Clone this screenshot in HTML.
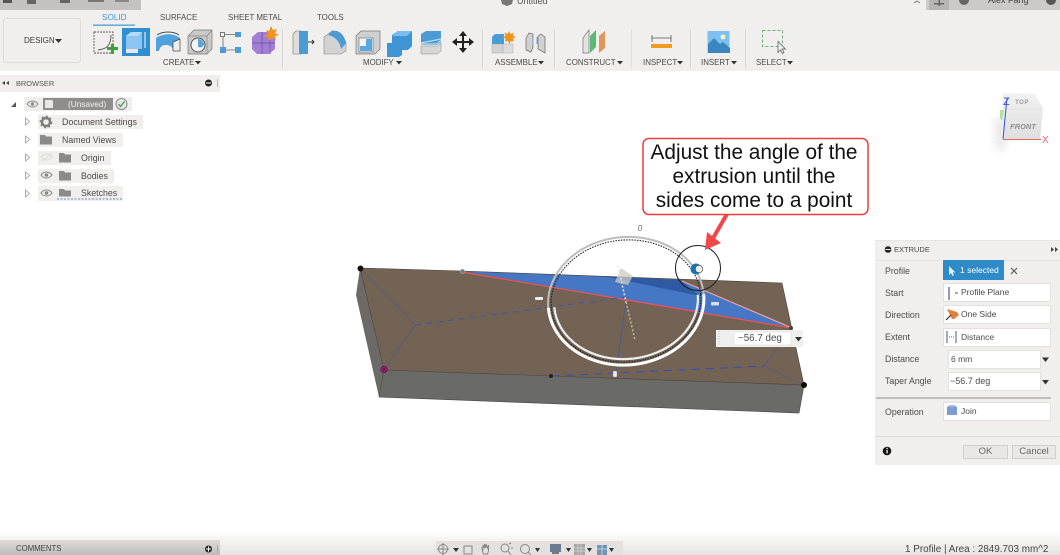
<!DOCTYPE html>
<html><head><meta charset="utf-8"><style>
html,body{margin:0;padding:0;background:#fff}
#p{position:relative;width:1060px;height:555px;overflow:hidden;background:#fff;font-family:"Liberation Sans",sans-serif;color:#444}
svg{position:absolute;left:0;top:0}
text{font-family:"Liberation Sans",sans-serif}
.t{position:absolute;white-space:nowrap;font-size:7.9px;color:#4a4a4a;line-height:12px}
.f{position:absolute;background:#fff;border:1px solid #e2e2e2;box-sizing:border-box;height:19px;font-size:8.5px;line-height:17px;color:#4a4a4a;white-space:nowrap}
.l{position:absolute;left:885px;font-size:8.8px;color:#4a4a4a;line-height:12px;white-space:nowrap}
</style></head><body><div id="p">
<svg width="1060" height="555" viewBox="0 0 1060 555">
<defs>
<linearGradient id="bot" x1="0" y1="0" x2="0" y2="1"><stop offset="0" stop-color="#fff"/><stop offset="1" stop-color="#e4e3e1"/></linearGradient>
<linearGradient id="b2" x1="0" y1="0" x2="0" y2="1"><stop offset="0" stop-color="#dcdbd9"/><stop offset="1" stop-color="#bebdbb"/></linearGradient>
<linearGradient id="cube" x1="0" y1="0" x2="0" y2="1"><stop offset="0" stop-color="#f2f2f2"/><stop offset="1" stop-color="#dedede"/></linearGradient>
<filter id="bl" x="-100%" y="-50%" width="300%" height="200%"><feGaussianBlur stdDeviation="4"/></filter>
<filter id="s"><feGaussianBlur stdDeviation=".35"/></filter>
</defs>
<!-- toolbar -->
<rect width="1060" height="71" fill="#f0efee"/>
<rect width="141" height="10" fill="#c3c2c1"/>
<rect x="926" width="134" height="10" fill="#cbcac9"/>
<rect x="929" width="20" height="10" fill="#b6b5b4"/>
<rect x="934" y="3" width="10" height="1.5" fill="#666"/><rect x="938.5" y="0" width="1.5" height="6" fill="#666"/>
<circle cx="964" cy="0" r="5" fill="#666"/><circle cx="1051" cy="0" r="5" fill="#555"/>
<path d="M914 3l3-2 3 2" fill="none" stroke="#777"/>
<rect x="3" width="9" height="3" fill="#555"/><rect x="27" width="9" height="4" fill="#666"/><rect x="60" width="10" height="3" fill="#666"/><rect x="88" width="16" height="2" fill="#777"/><rect x="115" width="14" height="2" fill="#888"/>
<path d="M501 0h12l-1 4-5 2-5-2z" fill="#777"/>
<rect x="3.500" y="18.500" width="77" height="44" rx="3" fill="#f0efee" stroke="#dedddc"/>
<path d="M55 39h7l-3.500 4z" fill="#333"/>
<rect x="93" y="24.500" width="42" height="1.300" fill="#4b9bd5"/>
<!-- sketch -->
<g fill="none" stroke="#555" stroke-width=".9">
<path d="M94 32h19v21h-19z" stroke-dasharray="2 1"/><path d="M98 50c10-1 13-6 13-15"/>
</g>
<path d="M107 47h4v-3h3v3h4v3h-4v4h-3v-4h-4z" fill="#3aa13c"/>
<!-- extrude -->
<rect x="122" y="28" width="28" height="28" fill="#2f8fd0"/>
<path d="M126 36l5-4h11v17h-16z" fill="#8cc5f2"/><path d="M131 32h11l-4 4h-12z" fill="#b4dbf8"/>
<rect x="126" y="49" width="12" height="4" fill="#e7e7e7"/>
<path d="M145 32v16" stroke="#fff"/>
<!-- revolve -->
<path d="M156 38c7-5 18-5 24 0v13h-7c0-5-4-6-7-6s-6 1-7 6h-3z" fill="#4fa2dd"/>
<path d="M173 42l7-3v12h-7z" fill="#eee" stroke="#444" stroke-width=".7"/>
<path d="M157 35c6-4 16-4 22 0" fill="none" stroke="#444" stroke-width=".9"/>
<!-- hole -->
<path d="M188 36l6-6h18v19l-5 5h-19z" fill="#c9c9c9" stroke="#777" stroke-width=".7"/><path d="M188 36h19l5-6M207 36v18" stroke="#888" fill="none" stroke-width=".7"/>
<circle cx="198" cy="45" r="7" fill="#f4f4f4" stroke="#555"/><path d="M198 45v-6a6 6 0 0 1 6 6 5 5 0 0 1-6 2z" fill="#5aa5db"/>
<!-- fillet points -->
<rect x="220.500" y="32.500" width="4" height="4" fill="#fff" stroke="#555" stroke-width=".8"/>
<rect x="235" y="32" width="6" height="5" fill="#4b9bd5"/><rect x="220" y="47" width="6" height="6" fill="#4b9bd5"/><rect x="235" y="47" width="6" height="6" fill="#4b9bd5"/>
<path d="M225 34.500h10M223 37v10M226 50h9" stroke="#666" stroke-width=".8"/>
<!-- purple -->
<path d="M252 37l6-5h12l5 5v12l-6 5h-12l-5-5z" fill="#a27fd2"/>
<path d="M252 43h23M262 32v22M270 33v21" stroke="#6e4ba8" stroke-width=".7"/>
<path d="M269 31l2-5 2 4 4-1-2 4 4 2-4 1 1 4-4-2-3 3-1-4-4-1 4-2-2-4z" fill="#f0941e"/>
<line x1="282.500" y1="30" x2="282.500" y2="68" stroke="#d8d7d6"/>
<!-- modify -->
<path d="M293 34l3-3h6v23h-9z" fill="#ddd" stroke="#777" stroke-width=".6"/>
<path d="M299 31h9v23h-9z" fill="#4b9bd5"/><path d="M308 42h6M312 40l2 2-2 2" stroke="#333" fill="none"/>
<path d="M324 37l8-6c8-1 12 5 14 12v8l-5 3h-17z" fill="#d2d2d2" stroke="#888" stroke-width=".6"/>
<path d="M332 31c8-1 12 5 14 12l-5 6c-1-7-5-12-13-14z" fill="#4b9bd5"/>
<path d="M356 36l5-5h19v18l-5 5h-19z" fill="#cfcfcf" stroke="#777" stroke-width=".7"/>
<rect x="359" y="38" width="14" height="14" fill="#f5f5f5" stroke="#666" stroke-width=".6"/>
<path d="M366 39h6v12h-12v-5h6z" fill="#5ba8e0"/>
<path d="M387 43l5 0 0-8 6-4h14v15l-4 4h-6v5l-3 2h-12z" fill="#3f94d6"/>
<path d="M392 36l6-5h14l-5 5z" fill="#7cbdf0"/>
<path d="M421 34l5-3h15v11l-4 3h-16z" fill="#4b9bd5"/>
<path d="M421 43l20-4M421 44h16l4-4" stroke="#bcd9ef" stroke-width="1.200" fill="none"/>
<path d="M421 46h16l4-3v8l-4 3h-16z" fill="#d6d6d6" stroke="#888" stroke-width=".5"/>
<path d="M463 31l4 5h-3v5h5v-3l5 4-5 4v-3h-5v5h3l-4 5-4-5h3v-5h-5v3l-5-4 5-4v3h5v-5h-3z" fill="#222"/>
<line x1="482.500" y1="30" x2="482.500" y2="68" stroke="#d8d7d6"/>
<!-- assemble -->
<rect x="492" y="44" width="11" height="9" fill="#d2d2d2" stroke="#aaa" stroke-width=".5"/><rect x="503" y="44" width="10" height="9" fill="#dcdcdc" stroke="#aaa" stroke-width=".5"/>
<path d="M492 37l3-3h9v10h-12z" fill="#4b9bd5"/>
<path d="M509 31l1.500 3 3-1.500-.5 3.500 3 1-3 1.500 1 3-3-.5-1.500 3-1.500-3-3 .5 .5-3-3-1.500 3-1-1-3.500 3 1.500z" fill="#f0941e"/>
<path d="M526 38l3-5 4 1v13l-2 5-5-2zM545 37l-4-3-3 2v13l7 4z" fill="#d0d0d0" stroke="#666" stroke-width=".7"/><path d="M533 39v6M537 37v7" stroke="#6aa6d6"/>
<line x1="554.500" y1="30" x2="554.500" y2="68" stroke="#d8d7d6"/>
<!-- construct -->
<path d="M583 38l6-8v23h-6z" fill="#e2e2e2" stroke="#777" stroke-width=".7"/>
<path d="M590 36l6-6v17l-6 6z" fill="#5cb874"/>
<path d="M599 36l6-5v17l-6 5z" fill="#e3955a"/>
<line x1="631.500" y1="30" x2="631.500" y2="68" stroke="#e0dfde"/>
<!-- inspect -->
<path d="M652 38h19M652 35v7M671 35v7" stroke="#555" stroke-width=".8"/>
<rect x="651" y="44" width="21" height="4" fill="#f09a1e"/>
<line x1="690.500" y1="30" x2="690.500" y2="68" stroke="#d8d7d6"/>
<!-- insert -->
<rect x="707.500" y="31" width="22" height="22" fill="#7cc0f0"/>
<path d="M708 53v-9l6-6 6 6 3-2 7 6v5z" fill="#3a87bf"/>
<circle cx="723" cy="37" r="2.500" fill="#fdf1c0"/>
<line x1="745.500" y1="30" x2="745.500" y2="68" stroke="#d8d7d6"/>
<!-- select -->
<rect x="762.500" y="30.500" width="20" height="16" fill="none" stroke="#68b07c" stroke-dasharray="3 2"/>
<path d="M778 41.500v11l2.500-2.500 2 3.500 1.500-1-2-3.500h3.500z" fill="#eee" stroke="#555" stroke-width=".7"/>
<!-- dropdown arrows -->
<g fill="#333">
<path d="M195 61h6l-3 3.500z"/><path d="M396 61h6l-3 3.500z"/><path d="M538 61h6l-3 3.500z"/><path d="M617 61h6l-3 3.500z"/><path d="M677 61h6l-3 3.500z"/><path d="M731 61h6l-3 3.500z"/><path d="M787 61h6l-3 3.500z"/>
</g>
<!-- browser -->
<rect y="75" width="220" height="17" fill="#f0efee"/>
<path d="M2 83l3-2v4zM6 83l3-2v4z" fill="#444"/>
<circle cx="208.500" cy="83" r="3.500" fill="#222"/><rect x="206" y="82.500" width="5" height="1" fill="#fff"/>
<rect x="217" y="79" width="1" height="8" fill="#bbb"/>
<path d="M11 107l5-5v5z" fill="#555"/>
<rect x="24" y="97" width="108" height="14" fill="#f0efee"/>
<rect x="43" y="98" width="70" height="12" fill="#8f8e8d"/>
<path d="M45 100h7l1 1v7h-8z" fill="#e8e8e8"/>
<path d="M27 104c3-4 8-4 11 0-3 4-8 4-11 0z" fill="none" stroke="#888"/><circle cx="32.500" cy="104" r="1.700" fill="#888"/>
<circle cx="121.500" cy="104" r="5.500" fill="#e6e6e6" stroke="#888"/><path d="M118.500 104l2 2.500 4-5" stroke="#3f9c4a" fill="none" stroke-width="1.300"/>
<g fill="#f0efee">
<rect x="38" y="115" width="105" height="14"/><rect x="38" y="133" width="85" height="14"/><rect x="38" y="151" width="73" height="14"/><rect x="38" y="169" width="76" height="14"/><rect x="38" y="186" width="85" height="15"/>
</g>
<g fill="none" stroke="#999" stroke-width=".8">
<path d="M25.500 118v7l4-3.500zM25.500 136v7l4-3.500zM25.500 154v7l4-3.500zM25.500 172v7l4-3.500zM25.500 190v7l4-3.500z"/>
</g>
<circle cx="46" cy="122" r="4" fill="none" stroke="#7d7d7d" stroke-width="2.500"/><circle cx="46" cy="122" r="5.700" fill="none" stroke="#7d7d7d" stroke-width="1.400" stroke-dasharray="2 2.400"/>
<g fill="#8a8a8a">
<path d="M40 135h5l1 1.500h6v8h-12z"/><path d="M59 153h5l1 1.500h6v8h-12z"/><path d="M59 171h5l1 1.500h6v8h-12z"/><path d="M59 189h5l1 1.500h6v6h-12z"/>
</g>
<g fill="none" stroke="#888">
<path d="M41 175c3-4 8-4 11 0-3 4-8 4-11 0z"/><path d="M41 193c3-4 8-4 11 0-3 4-8 4-11 0z"/>
</g>
<circle cx="46.500" cy="175" r="1.800" fill="#888"/><circle cx="46.500" cy="193" r="1.800" fill="#888"/>
<path d="M41 157c3-4 8-4 11 0-3 4-8 4-11 0zM42 161l10-8" fill="none" stroke="#dcdcdc"/>
<path d="M57 199h65" stroke="#6f86b5" stroke-dasharray="2 1.500"/>
<!-- model -->
<g filter="url(#s)">
<path d="M360 268l24 102-5 27-23-102z" fill="#6c6b69"/>
<path d="M384 370l420 15-5 28-420-16z" fill="#6b6b69"/>
<path d="M360 268l102 3 320 12 22 102-420-15z" fill="#736354"/>
<path d="M462 271l154 6 64 3 112 48z" fill="#4477c4"/>
<path d="M603 276l77 4 20 16z" fill="#2f5aa3"/>
<path d="M462 272l330 56" stroke="#f2505a" stroke-width="1.200" fill="none"/>
<path d="M682 281l110 47" stroke="#f7a0a0" stroke-width="1.200" fill="none"/>
<path d="M360 268l102 3 320 12 22 102-420-15z" fill="none" stroke="#4a433c" stroke-width=".6"/>
<path d="M379 397l420 16M384 370l-5 27M804 385l-5 28" stroke="#4e4e4c" stroke-width=".7" fill="none"/>
<path d="M360 268l55 57-31 45M764 366l40 19M764 366l24-32" stroke="#5c5a7c" stroke-width=".8" fill="none"/>
<path d="M415 325l211 -28" stroke="#3d58a8" stroke-width="1" stroke-dasharray="6 5" fill="none"/>
<path d="M552 376l212-10" stroke="#3450b8" stroke-width="1" stroke-dasharray="8 6" fill="none"/>
<path d="M626 301l-10 72" stroke="#4f5b88" stroke-width="1" fill="none"/>
</g>
<!-- protractor -->
<path d="M621 268l12 8-5 9-13-3z" fill="#cfcac4" opacity=".75"/>
<path d="M618 266l8 36" stroke="#e4e4e4" stroke-width="1.500" stroke-dasharray="2 2"/>
<path d="M626 302l9 38" stroke="#c9b894" stroke-width="1.500" stroke-dasharray="2 2"/>
<g transform="rotate(-5 626 301)" fill="none">
<path d="M548 301A78 64 0 0 1 704 301" stroke="#bdbdbd" stroke-width="2"/>
<path d="M548 301A78 64 0 0 0 704 301" stroke="#fff" stroke-width="3"/>
<path d="M554 301A72 58 0 0 0 698 301" stroke="#f4f4f4" stroke-width="2.200" opacity=".95"/>
<ellipse cx="626" cy="301" rx="75" ry="61" stroke="#222" stroke-width="1.100" stroke-dasharray="1.500 1.200"/>
</g>
<text x="640" y="231" font-size="8" font-style="italic" fill="#666" text-anchor="middle">0</text>
<rect x="535" y="297" width="8" height="3" rx="1" fill="#eee"/><rect x="711" y="302" width="8" height="3.500" rx="1" fill="#d8dde4"/>
<rect x="613" y="371" width="4" height="6" rx="1" fill="#eee" stroke="#888" stroke-width=".4"/>
<circle cx="698" cy="268" r="22.500" fill="none" stroke="#222" stroke-width="1"/>
<circle cx="696" cy="269" r="5.500" fill="#1a73b5"/><circle cx="699" cy="269" r="3.800" fill="#e8eef2" stroke="#333" stroke-width=".6"/>
<circle cx="360.500" cy="268.500" r="3" fill="#111"/>
<circle cx="384" cy="369.500" r="3.300" fill="#9c1672" stroke="#4a2038" stroke-width=".6"/><circle cx="384" cy="369.500" r="1" fill="#3a1a30"/>
<circle cx="462.500" cy="271.500" r="2" fill="#777" stroke="#999"/>
<circle cx="551" cy="376" r="2" fill="#222"/>
<circle cx="804" cy="385" r="3" fill="#0a0a0a"/>
<circle cx="791" cy="328" r="2" fill="#444"/>
<rect x="716" y="330" width="87" height="17" fill="#efefed"/>
<rect x="734" y="332" width="57" height="13" fill="#fff" stroke="#e2e2e2" stroke-width=".7"/>
<path d="M795 337h7l-3.500 4.500z" fill="#333"/>
<path d="M719 331v15" stroke="#bbb" stroke-dasharray="1 1.500"/>
<!-- callout -->
<path d="M727 214L712 240" stroke="#f04848" stroke-width="4" fill="none"/>
<path d="M705 250l2-18 14 11z" fill="#f04848"/>
<rect x="643" y="138.500" width="225" height="76" rx="6" fill="#fff" stroke="#ee3d3d" stroke-width="1.500"/>
<!-- view cube -->
<path d="M994 118h12v32h-10z" fill="#e9e9e9" filter="url(#bl)"/>
<path d="M1003 93l32 1 8 14-3 32-37 0z" fill="url(#cube)"/>
<path d="M1004 109l38 0" stroke="#e2e2e2"/>
<path d="M1007 98l-4 41" stroke="#3a52d8"/><path d="M1003 139.500h38" stroke="#e66"/>
<path d="M1000 110l0 8 2 3 2-11z" fill="#a9e3a8"/>
<text x="1003" y="105" font-size="11" fill="#4353d8">Z</text>
<text x="1042" y="143" font-size="10" fill="#ee6a6a">X</text>
<text x="1022" y="104" font-size="6" font-weight="bold" fill="#999" text-anchor="middle" letter-spacing=".5">TOP</text>
<text x="1023" y="129" font-size="7.500" font-weight="bold" font-style="italic" fill="#8f8f8f" text-anchor="middle">FRONT</text>
<!-- panel -->
<rect x="875" y="240" width="185" height="225" fill="#f0efee"/>
<rect x="875" y="240" width="185" height="1" fill="#e6e5e4"/>
<rect x="875" y="260" width="185" height="1" fill="#e4e3e2"/>
<rect x="875" y="436" width="185" height="1" fill="#dcdbda"/>
<rect x="876" y="397" width="175" height="2" fill="#bfbebd"/>
<circle cx="888" cy="249.500" r="3.300" fill="#222"/><rect x="885.500" y="249" width="5" height="1" fill="#fff"/>
<path d="M1051 247v5l3-2.500zM1055 247v5l3-2.500z" fill="#444"/>
<rect x="943" y="260" width="61" height="20" fill="#2e8bc8"/>
<path d="M949 266v9l2-2 1.500 3 1.500-1-1.500-2.500h3z" fill="#e6eef5"/>
<path d="M1011 268l6 6m0-6l-6 6" stroke="#555" stroke-width="1.100"/>
<!-- extrude arrows -->
<g fill="#333"><path d="M1042 291h7l-3.500 4.500z"/><path d="M1042 313h7l-3.500 4.500z"/><path d="M1042 335.500h7l-3.500 4.500z"/><path d="M1042 357.500h7l-3.500 4.500z"/><path d="M1042 380h7l-3.500 4.500z"/><path d="M1042 410h7l-3.500 4.500z"/></g>
<circle cx="887" cy="451" r="4.300" fill="#151515"/><rect x="886.400" y="449.800" width="1.300" height="3.600" fill="#fff"/><rect x="886.400" y="447.800" width="1.300" height="1.200" fill="#fff"/>
<!-- bottom -->
<rect y="530" width="1060" height="25" fill="url(#bot)"/>
<rect y="540" width="220" height="15" fill="url(#b2)"/>
<circle cx="208.500" cy="549" r="3.500" fill="#222"/><rect x="206" y="548.500" width="5" height="1" fill="#fff"/><rect x="208" y="546.500" width="1" height="5" fill="#fff"/>
<rect x="217" y="545" width="1" height="8" fill="#aaa"/>
<rect x="436" y="541" width="187" height="14" fill="#e2e1e0"/>
<g fill="#333"><path d="M453 548h6l-3 4z"/><path d="M535 548h5l-2.500 4z"/><path d="M566 548h5l-2.500 4z"/><path d="M587 548h5l-2.500 4z"/><path d="M609 548h5l-2.500 4z"/></g>
<g fill="none" stroke="#888" stroke-width="1">
<circle cx="443" cy="549" r="4.500"/><path d="M443 543v12M437 549h12"/>
<rect x="464" y="546" width="8" height="8"/>
<path d="M483 553l-1-5 1 1v-4l1.500 3v-4l1.500 4v-4l1.500 4 1-3v6l-1 3h-4z"/>
<circle cx="505" cy="548" r="4"/><path d="M508 551l3 4M509 544l2-1M511 548h2"/>
<circle cx="525" cy="549" r="4.500"/><path d="M528 552l3 3"/>
</g>
<rect x="550" y="544" width="11" height="8" fill="#6a7a90"/><rect x="552" y="552" width="7" height="2" fill="#777"/>
<rect x="574" y="544" width="11" height="11" fill="#a6a6a6"/><path d="M578 544v11M581 544v11M574 548h11M574 551h11" stroke="#d6d6d6" stroke-width=".7"/>
<rect x="597" y="545" width="10" height="10" fill="#6e95b8"/><path d="M602 545v10M597 549h10" stroke="#ddd" stroke-width=".8"/>
</svg>
<div class="t" style="left:24px;top:34.500px;font-size:8px;color:#3a3a3a">DESIGN</div>
<div class="t" style="left:102px;top:12px;color:#3f96d5;font-size:8.200px">SOLID</div>
<div class="t" style="left:160px;top:12px">SURFACE</div>
<div class="t" style="left:228px;top:12px">SHEET METAL</div>
<div class="t" style="left:317px;top:12px">TOOLS</div>
<div class="t" style="left:163px;top:57px">CREATE</div>
<div class="t" style="left:363px;top:57px">MODIFY</div>
<div class="t" style="left:495px;top:57px">ASSEMBLE</div>
<div class="t" style="left:566px;top:57px">CONSTRUCT</div>
<div class="t" style="left:643px;top:57px">INSPECT</div>
<div class="t" style="left:701px;top:57px">INSERT</div>
<div class="t" style="left:756px;top:57px">SELECT</div>
<div class="t" style="left:517px;top:-5px;font-size:9px;color:#555">Untitled</div>
<div class="t" style="left:988px;top:-6px;font-size:9px;color:#444">Alex Fang</div>
<div class="t" style="left:16px;top:77.500px;font-size:7.400px;color:#555">BROWSER</div>
<div class="t" style="left:68px;top:98px;font-size:8.300px;color:#f2f2f2">(Unsaved)</div>
<div class="t" style="left:62px;top:116px;font-size:8.900px">Document Settings</div>
<div class="t" style="left:62px;top:134px;font-size:8.800px">Named Views</div>
<div class="t" style="left:81px;top:152px;font-size:8.800px">Origin</div>
<div class="t" style="left:81px;top:170px;font-size:8.800px">Bodies</div>
<div class="t" style="left:81px;top:187px;font-size:8.800px">Sketches</div>
<div class="t" style="left:16px;top:543px;font-size:7.800px;color:#444">COMMENTS</div>
<div class="t" style="left:905px;top:543.500px;font-size:9.900px;color:#444">1 Profile | Area : 2849.703 mm^2</div>
<div class="t" style="left:738px;top:333px;font-size:9.800px">−56.7 deg</div>
<div style="position:absolute;left:643px;top:140.500px;width:222px;text-align:center;font-size:20.800px;line-height:24.200px;color:#111;white-space:nowrap">Adjust the angle of the<br>extrusion until the<br>sides come to a point</div>
<div class="t" style="left:894px;top:244px;font-size:7.500px">EXTRUDE</div>
<div class="l" style="top:265px">Profile</div>
<div class="l" style="top:287px">Start</div>
<div class="l" style="top:309px">Direction</div>
<div class="l" style="top:331px">Extent</div>
<div class="l" style="top:353px">Distance</div>
<div class="l" style="top:375px">Taper Angle</div>
<div class="l" style="top:406px">Operation</div>
<div class="t" style="left:960px;top:264px;font-size:8.500px;color:#fff">1 selected</div>
<div class="f" style="left:943px;top:283px;width:108px;padding-left:17px">Profile Plane</div>
<div class="f" style="left:943px;top:305px;width:108px;padding-left:17px">One Side</div>
<div class="f" style="left:943px;top:328px;width:108px;padding-left:17px">Distance</div>
<div class="f" style="left:948px;top:350px;width:93px;padding-left:2px">6 mm</div>
<div class="f" style="left:948px;top:372px;width:93px;padding-left:1px;font-size:9px">−56.7 deg</div>
<div class="f" style="left:943px;top:402px;width:108px;padding-left:17px">Join</div>
<svg width="1060" height="555" viewBox="0 0 1060 555" style="pointer-events:none">
<path d="M949 287v13" stroke="#4a5a8a" stroke-width="1.200"/><path d="M955 293h3" stroke="#555"/>
<path d="M947 309l10 3 2 3-5 4-2 0z" fill="#e2803a"/><path d="M946 320l5-5" stroke="#333" stroke-width="1.200"/>
<path d="M947 331v12M956 331v12" stroke="#4a5a8a"/><path d="M949 337h5" stroke="#666" stroke-dasharray="1 1"/>
<rect x="947" y="407" width="10" height="8" fill="#7b9dd0"/><path d="M947 407l2-2h6l2 2" fill="#a5bde0"/>
</svg>
<div style="position:absolute;left:963px;top:445px;width:45px;height:14px;background:#e9e8e7;border:1px solid #d0cfce;box-sizing:border-box;text-align:center;font-size:9.500px;line-height:12px;color:#666">OK</div>
<div style="position:absolute;left:1012px;top:445px;width:44px;height:14px;background:#e9e8e7;border:1px solid #d0cfce;box-sizing:border-box;text-align:center;font-size:9.500px;line-height:12px;color:#666">Cancel</div>
</div></body></html>
